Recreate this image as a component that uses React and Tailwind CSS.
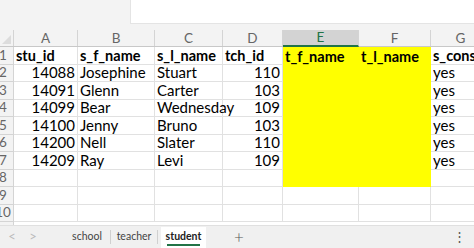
import React from "react";

const cols = [
  { l: "A", w: 64 },
  { l: "B", w: 77 },
  { l: "C", w: 68 },
  { l: "D", w: 60 },
  { l: "E", w: 76 },
  { l: "F", w: 72 },
  { l: "G", w: 60 },
];

const rows = [
  ["stu_id", "s_f_name", "s_l_name", "tch_id", "t_f_name", "t_l_name", "s_consent"],
  ["14088", "Josephine", "Stuart", "110", "", "", "yes"],
  ["14091", "Glenn", "Carter", "103", "", "", "yes"],
  ["14099", "Bear", "Wednesday", "109", "", "", "yes"],
  ["14100", "Jenny", "Bruno", "103", "", "", "yes"],
  ["14200", "Nell", "Slater", "110", "", "", "yes"],
  ["14209", "Ray", "Levi", "109", "", "", "yes"],
  ["", "", "", "", "", "", ""],
  ["", "", "", "", "", "", ""],
  ["", "", "", "", "", "", ""],
];

export default function App() {
  return (
    <div
      className="w-[474px] h-[248px] overflow-hidden bg-white flex flex-col text-black"
      style={{ fontFamily: "Lato, 'Open Sans', sans-serif" }}
    >
      {/* top band */}
      <div className="h-[30px] bg-[#f3f3f3] flex shrink-0">
        <div className="w-[130px]" />
        <div className="flex-1 h-[24px] bg-white border-b border-l border-[#e4e4e4]" />
      </div>
      {/* column headers */}
      <div className="h-[17px] flex shrink-0 bg-[#f3f3f3] border-b border-[#c8c8c8]">
        <div className="w-[14px] shrink-0 border-r border-[#d4d4d4] relative">
          <div className="absolute right-[2px] bottom-[2px] w-0 h-0 border-l-[9px] border-l-transparent border-b-[9px] border-b-[#dcdcdc]" />
        </div>
        {cols.map((c) =>
          c.l === "E" ? (
            <div
              key={c.l}
              style={{ width: c.w }}
              className="shrink-0 bg-[#d3d3d3] border-b-2 border-[#217346] -mb-[1px] flex items-center justify-center text-[13.5px] text-[#217346] border-r border-r-[#d4d4d4]"
            >
              {c.l}
            </div>
          ) : (
            <div
              key={c.l}
              style={{ width: c.w }}
              className="shrink-0 border-r border-[#d4d4d4] flex items-center justify-center text-[13.5px] text-[#666]"
            >
              {c.l}
            </div>
          )
        )}
      </div>
      {/* rows */}
      {rows.map((r, i) => (
        <div key={i} className="h-[17.5px] flex shrink-0">
          <div className="w-[14px] shrink-0 overflow-hidden bg-[#f3f3f3] border-r border-b border-[#d4d4d4] flex">
            <div className="w-[22px] -ml-[8px] shrink-0 flex items-center justify-center text-[13.5px] text-[#666] leading-none">
              {i + 1}
            </div>
          </div>
          {r.map((v, j) => {
            const yellow = (j === 4 || j === 5) && i < 8;
            const numeric = i > 0 && (j === 0 || j === 3);
            return (
              <div
                key={j}
                style={{ width: cols[j].w }}
                className={
                  "shrink-0 flex items-end px-[2px] whitespace-nowrap overflow-visible leading-[17px] " +
                  (yellow
                    ? "bg-[#ffff00] "
                    : "border-r border-b border-[#e1e1e1] ") +
                  (numeric ? "justify-end " : "justify-start ") +
                  (i === 0 ? "font-bold text-[14.5px] " : "text-[15px] ")
                }
              >
                {v}
              </div>
            );
          })}
        </div>
      ))}
      <div className="flex-1 flex">
        <div className="w-[14px] bg-[#f3f3f3] border-r border-[#d4d4d4]" />
      </div>
      {/* tab bar */}
      <div className="h-[23px] shrink-0 bg-[#f0f0f0] border-t border-[#e0e0e0] flex items-center text-[10.5px] text-[#444]">
        <span className="ml-[8px] w-[8px] text-center text-[#bbb] text-[13px]">&lt;</span>
        <span className="ml-[13px] w-[8px] text-center text-[#bbb] text-[13px]">&gt;</span>
        <span className="ml-[27px] w-[46px] text-center">school</span>
        <div className="w-px h-[14px] bg-[#d0d0d0]" />
        <span className="w-[46px] text-center">teacher</span>
        <div className="w-px h-[14px] bg-[#d0d0d0]" />
        <div className="ml-[3px] self-stretch mt-[1px] w-[45px] bg-white flex flex-col items-center justify-center">
          <span className="font-bold text-[#222] leading-[13px]">student</span>
          <div className="w-[33px] h-[2px] bg-[#217346] mt-[1px]" />
        </div>
        <span className="w-[66px] text-center text-[17px] font-light text-[#555]">+</span>
        <span className="ml-auto mr-[8px] text-[13px] text-[#555]">⋮</span>
      </div>
    </div>
  );
}
